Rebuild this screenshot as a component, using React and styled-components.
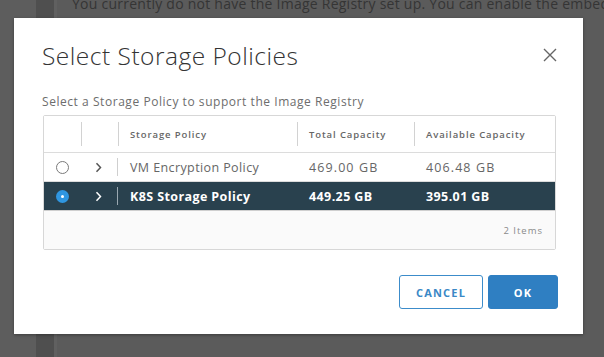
import React from 'react';
import styled, { createGlobalStyle } from 'styled-components';

const Global = createGlobalStyle`
  html, body { margin: 0; padding: 0; }
  body { font-family: "Open Sans", sans-serif; background: #5b5b5b; }
`;

const Page = styled.div`
  position: relative;
  width: 604px;
  height: 357px;
  overflow: hidden;
  display: grid;
  grid-template-columns: 36px 21px 1fr;
  background: #5b5b5b;
`;

const Rail = styled.div`
  background: ${p => p.dark ? '#4f4f4f' : '#5d5d5d'};
  border-right: ${p => p.dark ? '3px solid #606060' : 'none'};
`;

const Content = styled.div`
  padding: 0 0 0 15px;
  color: #353535;
  font-size: 14px;
  letter-spacing: 0.25px;
  white-space: nowrap;
  overflow: hidden;
  line-height: 12px;
  margin-top: -2px;
`;

const Backdrop = styled.div`
  position: absolute;
  inset: 0;
  padding: 18px 21px 23px 14px;
`;

const Modal = styled.div`
  width: 569px;
  height: 316px;
  box-sizing: border-box;
  background: #fff;
  box-shadow: 0 1px 3px rgba(0,0,0,0.35);
  padding: 22px 26px 0 28px;
  display: flex;
  flex-direction: column;
`;

const Header = styled.div`
  display: flex;
  justify-content: space-between;
  align-items: center;
  height: 30px;
`;

const Title = styled.h1`
  margin: 0;
  font-weight: 300;
  font-size: 24.5px;
  color: #333;
  letter-spacing: 0.5px;
`;

const Close = styled.button`
  border: 0;
  background: none;
  padding: 0;
  width: 14px;
  height: 14px;
  display: flex;
`;

const Lead = styled.p`
  margin: 25px 0 0 0;
  font-size: 12px;
  color: #6d6d6d;
  line-height: 14px;
  letter-spacing: 0.55px;
`;

const Grid = styled.div`
  margin-top: 6px;
  margin-left: 1px;
  margin-right: 1px;
  border: 1px solid #d7d7d7;
  border-radius: 2px;
`;

const Row = styled.div`
  display: grid;
  grid-template-columns: 37px 37px 179px 117px 1fr;
  align-items: center;
  box-sizing: border-box;
  height: ${p => p.head ? '37px' : '29px'};
  background: ${p => p.selected ? '#29414e' : '#fff'};
  color: ${p => p.selected ? '#fff' : '#666'};
  font-weight: ${p => p.selected ? 700 : 400};
  border-bottom: 1px solid ${p => p.selected ? '#cfcfcf' : '#dcdcdc'};
  box-shadow: ${p => p.selected ? '0 2px 1px #e3e3e3' : 'none'};
  font-size: 12.5px;
  letter-spacing: 0.4px;
`;

const HeadCell = styled.div`
  font-size: 9.5px;
  font-weight: 600;
  color: #666;
  letter-spacing: 0.9px;
  padding-left: 11px;
  height: 24px;
  display: flex;
  align-items: center;
  border-left: ${p => p.first ? 'none' : '1px solid #d2d2d2'};
`;

const Cell = styled.div`
  padding-left: 12px;
  display: flex;
  align-items: center;
  height: 100%;
  letter-spacing: ${p => p.num ? (p.bold ? '0.4px' : '1.1px') : 'inherit'};
`;

const RadioCell = styled.div`
  display: flex;
  justify-content: center;
  align-items: center;
  padding-right: 1px;
`;

const Radio = styled.span`
  width: 13px;
  height: 13px;
  border-radius: 50%;
  box-sizing: border-box;
  border: ${p => p.checked ? '5px solid #2f96e0' : '1px solid #7a7a7a'};
  background: ${p => p.checked ? '#fff' : 'transparent'};
`;

const ExpandCell = styled.div`
  display: flex;
  align-items: center;
  justify-content: flex-end;
  gap: 15px;
  height: 100%;
`;

const Bar = styled.span`
  width: 1px;
  height: 18px;
  background: ${p => p.light ? '#9aa8b1' : '#cfcfcf'};
`;

const Footer = styled.div`
  height: 38px;
  background: #fafafa;
  display: flex;
  justify-content: flex-end;
  align-items: center;
  padding-right: 12px;
  font-size: 9.5px;
  letter-spacing: 1px;
  color: #8a8a8a;
`;

const Actions = styled.div`
  margin-top: 25px;
  display: flex;
  justify-content: flex-end;
  gap: 5px;
  margin-right: -1px;
`;

const Button = styled.button`
  height: 34px;
  min-width: ${p => p.primary ? '70px' : '84px'};
  box-sizing: border-box;
  border-radius: 3px;
  border: 1px solid ${p => p.primary ? '#2f7fc2' : '#3c8cca'};
  background: ${p => p.primary ? '#2f7fc2' : '#fff'};
  color: ${p => p.primary ? '#fff' : '#3a88c6'};
  font-family: "Open Sans", sans-serif;
  font-weight: 700;
  font-size: 11px;
  letter-spacing: 1.2px;
  padding: 0 12px;
`;

const rows = [
  { name: 'VM Encryption Policy', total: '469.00 GB', avail: '406.48 GB', checked: false },
  { name: 'K8S Storage Policy', total: '449.25 GB', avail: '395.01 GB', checked: true },
];

function Chevron({ color }) {
  return (
    <svg width="7" height="11" viewBox="0 0 7 11">
      <path d="M1.5 1.2l4 4.3-4 4.3" fill="none" stroke={color} strokeWidth="1.5" />
    </svg>
  );
}

export default function App() {
  return (
    <>
      <Global />
      <Page>
        <Rail />
        <Rail dark />
        <Content>You currently do not have the Image Registry set up. You can enable the embedded</Content>
        <Backdrop>
          <Modal>
            <Header>
              <Title>Select Storage Policies</Title>
              <Close aria-label="close">
                <svg width="14" height="14" viewBox="0 0 14 14">
                  <path d="M1 1l12 12M13 1L1 13" stroke="#666" strokeWidth="1.4" />
                </svg>
              </Close>
            </Header>
            <Lead>Select a Storage Policy to support the Image Registry</Lead>
            <Grid>
              <Row head>
                <HeadCell first />
                <HeadCell />
                <HeadCell>Storage Policy</HeadCell>
                <HeadCell>Total Capacity</HeadCell>
                <HeadCell>Available Capacity</HeadCell>
              </Row>
              {rows.map(r => (
                <Row key={r.name} selected={r.checked}>
                  <RadioCell><Radio checked={r.checked} /></RadioCell>
                  <ExpandCell>
                    <Chevron color={r.checked ? '#fff' : '#555'} />
                    <Bar light={r.checked} />
                  </ExpandCell>
                  <Cell>{r.name}</Cell>
                  <Cell num bold={r.checked}>{r.total}</Cell>
                  <Cell num bold={r.checked}>{r.avail}</Cell>
                </Row>
              ))}
              <Footer>2 Items</Footer>
            </Grid>
            <Actions>
              <Button>CANCEL</Button>
              <Button primary>OK</Button>
            </Actions>
          </Modal>
        </Backdrop>
      </Page>
    </>
  );
}
